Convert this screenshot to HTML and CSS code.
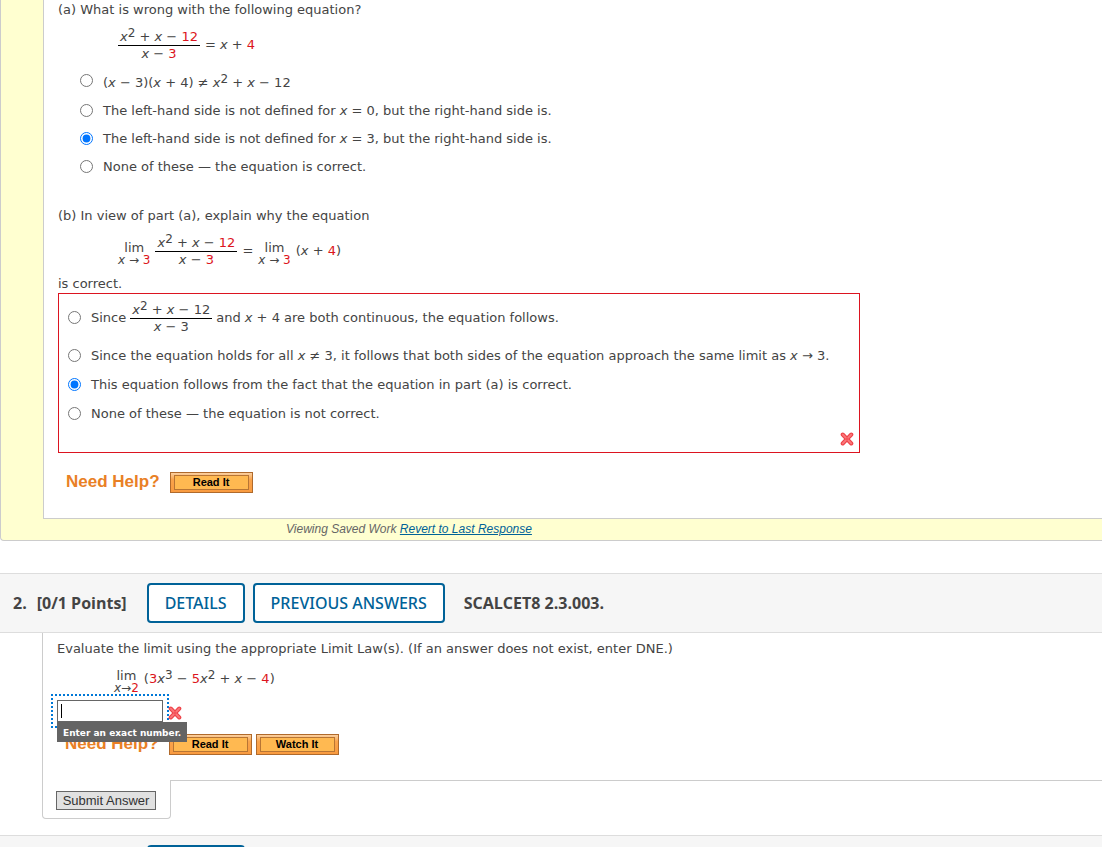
FILE: index.html
```
<!DOCTYPE html>
<html lang="en">
<head>
<meta charset="utf-8">
<title>Limit Laws</title>
<link rel="stylesheet" href="styles.css">
</head>
<body>
<svg class="defs" aria-hidden="true"><defs>
<symbol id="cross" viewBox="0 0 14 14"><path d="M2.7 2.5 11.3 11.5M11.3 2.5 2.7 11.5" stroke="#ee4248" stroke-width="4" stroke-linecap="round"/><path d="M2.8 2.6 11.2 11.4M11.2 2.6 2.8 11.4" stroke="#fa777a" stroke-width="2" stroke-linecap="round"/><path d="M5 7 7 5 9 7 7 9z" fill="#f4555a"/></symbol>
</defs></svg>
<main>
<section class="saved">
  <div class="question">
    <p class="line">(a) What is wrong with the following equation?</p>
    <div class="math">
      <span class="frac"><span class="num"><i>x</i><sup>2</sup> + <i>x</i> − <b>12</b></span><span><i>x</i> − <b>3</b></span></span>
      <span>= <i>x</i> + <b>4</b></span>
    </div>
    <div class="options">
      <label class="opt raised"><input type="radio" name="a"><span>(<i>x</i> − 3)(<i>x</i> + 4) ≠ <i>x</i><sup>2</sup> + <i>x</i> − 12</span></label>
      <label class="opt"><input type="radio" name="a"><span>The left-hand side is not defined for <i>x</i> = 0, but the right-hand side is.</span></label>
      <label class="opt"><input type="radio" name="a" checked><span>The left-hand side is not defined for <i>x</i> = 3, but the right-hand side is.</span></label>
      <label class="opt"><input type="radio" name="a"><span>None of these — the equation is correct.</span></label>
    </div>
    <p class="line">(b) In view of part (a), explain why the equation</p>
    <div class="math">
      <span class="lim"><span>lim</span><span class="to"><i>x</i> → <b>3</b></span></span>
      <span class="frac"><span class="num"><i>x</i><sup>2</sup> + <i>x</i> − <b>12</b></span><span><i>x</i> − <b>3</b></span></span>
      <span>=</span>
      <span class="lim"><span>lim</span><span class="to"><i>x</i> → <b>3</b></span></span>
      <span>(<i>x</i> + <b>4</b>)</span>
    </div>
    <p class="line">is correct.</p>
    <div class="wrong">
      <label class="opt tall"><input type="radio" name="b"><span class="mixed">Since <span class="frac"><span class="num"><i>x</i><sup>2</sup> + <i>x</i> − 12</span><span><i>x</i> − 3</span></span> <span>and <i>x</i> + 4 are both continuous, the equation follows.</span></span></label>
      <label class="opt"><input type="radio" name="b"><span>Since the equation holds for all <i>x</i> ≠ 3, it follows that both sides of the equation approach the same limit as <i>x</i> → 3.</span></label>
      <label class="opt"><input type="radio" name="b" checked><span>This equation follows from the fact that the equation in part (a) is correct.</span></label>
      <label class="opt"><input type="radio" name="b"><span>None of these — the equation is not correct.</span></label>
      <svg class="cross" role="img" aria-label="Incorrect"><use href="#cross"/></svg>
    </div>
    <div class="help"><strong>Need Help?</strong><button class="orange" type="button"><span>Read It</span></button></div>
  </div>
  <p class="status">Viewing Saved Work <a href="#">Revert to Last Response</a></p>
</section>

<section>
  <header class="bar">
    <h2>2.</h2><span class="points">[0/1 Points]</span>
    <button class="blue" type="button">DETAILS</button>
    <button class="blue" type="button">PREVIOUS ANSWERS</button>
    <span class="code">SCALCET8 2.3.003.</span>
  </header>
  <form class="limit">
    <div class="problem">
      <p class="line"><label for="answer">Evaluate the limit using the appropriate Limit Law(s). (If an answer does not exist, enter DNE.)</label></p>
      <div class="math">
        <span class="lim"><span>lim</span><span class="to"><i>x</i>→<b>2</b></span></span>
        <span>(<b>3</b><i>x</i><sup>3</sup> − <b>5</b><i>x</i><sup>2</sup> + <i>x</i> − <b>4</b>)</span>
      </div>
      <div class="entry">
        <input id="answer" type="text" autocomplete="off" autofocus aria-describedby="tip">
        <svg class="cross" role="img" aria-label="Incorrect"><use href="#cross"/></svg>
        <span class="tip" id="tip" role="tooltip">Enter an exact number.</span>
      </div>
      <div class="help"><strong>Need Help?</strong><button class="orange" type="button"><span>Read It</span></button><button class="orange" type="button"><span>Watch It</span></button></div>
    </div>
    <div class="foot"><div class="tab"><button class="submit" type="button">Submit Answer</button></div><div class="rule"></div></div>
  </form>
</section>

<section>
  <header class="bar"><h2>3.</h2><span class="points">[0/1 Points]</span><button class="blue" type="button">DETAILS</button></header>
</section>
</main>
</body>
</html>
```
FILE: styles.css
```
* { box-sizing: border-box; }
body { margin: 0; background: #fff; color: #444; font: 13px/18px Verdana, "DejaVu Sans", sans-serif; }
main { height: 100vh; overflow: hidden; }
p, h2 { margin: 0; }
.defs { position: absolute; width: 0; height: 0; }
b { color: #dc1420; font-weight: normal; }
sup { font-size: 12px; line-height: 0; vertical-align: 4px; }
.cross { display: block; width: 14px; height: 14px; }

.saved { background: #ffffd0; border: 1px solid #ccc; border-width: 0 0 1px 1px; border-bottom-left-radius: 4px; margin-bottom: 32px; }
.question { margin-left: 42px; padding: 1px 0 25px 14px; background: #fff; border: 1px solid #ccc; border-width: 0 0 1px 1px; }
.line { min-height: 18px; }
.math { display: flex; align-items: center; gap: 5px; padding-left: 60px; margin: 8px 0 7px; min-height: 34px; }
.frac { display: inline-flex; flex-direction: column; align-items: center; line-height: 16px; margin-top: 2px; }
.num { border-bottom: 1px solid #000; padding: 0 2px; }
.lim { display: inline-flex; flex-direction: column; align-items: center; line-height: 12px; padding-top: 6px; }
.to { font-size: 12px; }

.options { padding-left: 22px; margin-bottom: 26px; }
.opt { display: flex; align-items: center; gap: 10px; min-height: 29px; }
.options .opt { min-height: 28px; }
.opt input { flex: none; width: 13px; height: 13px; margin: 0 0 1px; }
.opt.raised input { margin-bottom: 6px; }
.mixed { display: flex; align-items: center; gap: 4px; }
.tall { min-height: 47px; }
.wrong { max-width: 802px; margin-right: 8px; border: 1px solid #dc1420; padding: 0 5px 6px 9px; }
.wrong .cross { margin: 4px 0 0 auto; }

.help { display: flex; align-items: center; gap: 4px; padding-left: 8px; margin-top: 18px; }
.help strong { color: #e98025; font: bold 17px/22px "Liberation Sans", Arial, sans-serif; margin-right: 6px; }
.orange { width: 83px; height: 21px; padding: 2px 3px; border: 1px solid #b06a2c; background: linear-gradient(#fbd0a0, #f9a34b 35%, #f99b40); font: bold 11px/13px "Liberation Sans", Arial, sans-serif; color: #000; }
.orange span { display: block; border: 1px solid #b87534; background: #ffb951; }
.status { padding-left: 285px; height: 21px; font: italic 12px/20px "Liberation Sans", Arial, sans-serif; color: #666; }
.status a { color: #006298; }

.bar { display: flex; align-items: center; gap: 8px; height: 60px; padding-left: 13px; background: #f6f6f6; border: 1px solid #ddd; border-width: 1px 0; font: 700 16px/22px "Open Sans", sans-serif; color: #444; }
.bar h2 { font: inherit; margin-right: 2px; }
.points { margin-right: 12px; }
.code { margin-left: 11px; }
.blue { height: 40px; padding: 0 16px; border: 2px solid #006298; border-radius: 4px; background: #fff; color: #006298; font: 500 16px/22px "Noto Sans", "Open Sans", sans-serif; }

.limit { margin-left: 42px; }
.problem { border-left: 1px solid #ccc; padding: 7px 0 25px 14px; }
.problem .math { padding-left: 57px; margin: 4px 0; }
.entry { display: flex; align-items: center; gap: 5px; position: relative; }
.entry input { width: 106px; height: 22px; border: 1px solid #666; border-radius: 0; padding: 1px 3px; font: 16px/18px "Liberation Sans", Arial, sans-serif; background: linear-gradient(#000, #000) 3px 3px / 1px 14px no-repeat #fff; caret-color: transparent; outline: 2px dotted #0078d7; outline-offset: 4px; }
.entry .cross { margin-top: 4px; }
.tip { position: absolute; top: 100%; left: 0; padding: 3px 6px 1px; background: #646464; color: #fff; font: bold 9px/16px Verdana, "DejaVu Sans", sans-serif; white-space: nowrap; }
.problem .help { margin-top: 11px; }
.foot { display: flex; margin-bottom: 16px; }
.tab { width: 129px; height: 39px; border: 1px solid #ccc; border-top: 0; border-radius: 0 0 4px 4px; padding: 11px 13px 0; }
.rule { flex: 1; border-top: 1px solid #ccc; }
.submit { display: block; width: 100px; height: 19px; padding: 0; border: 1px solid #666; background: #e1e1e1; color: #333; font: 13px/17px "Liberation Sans", Arial, sans-serif; }
```
